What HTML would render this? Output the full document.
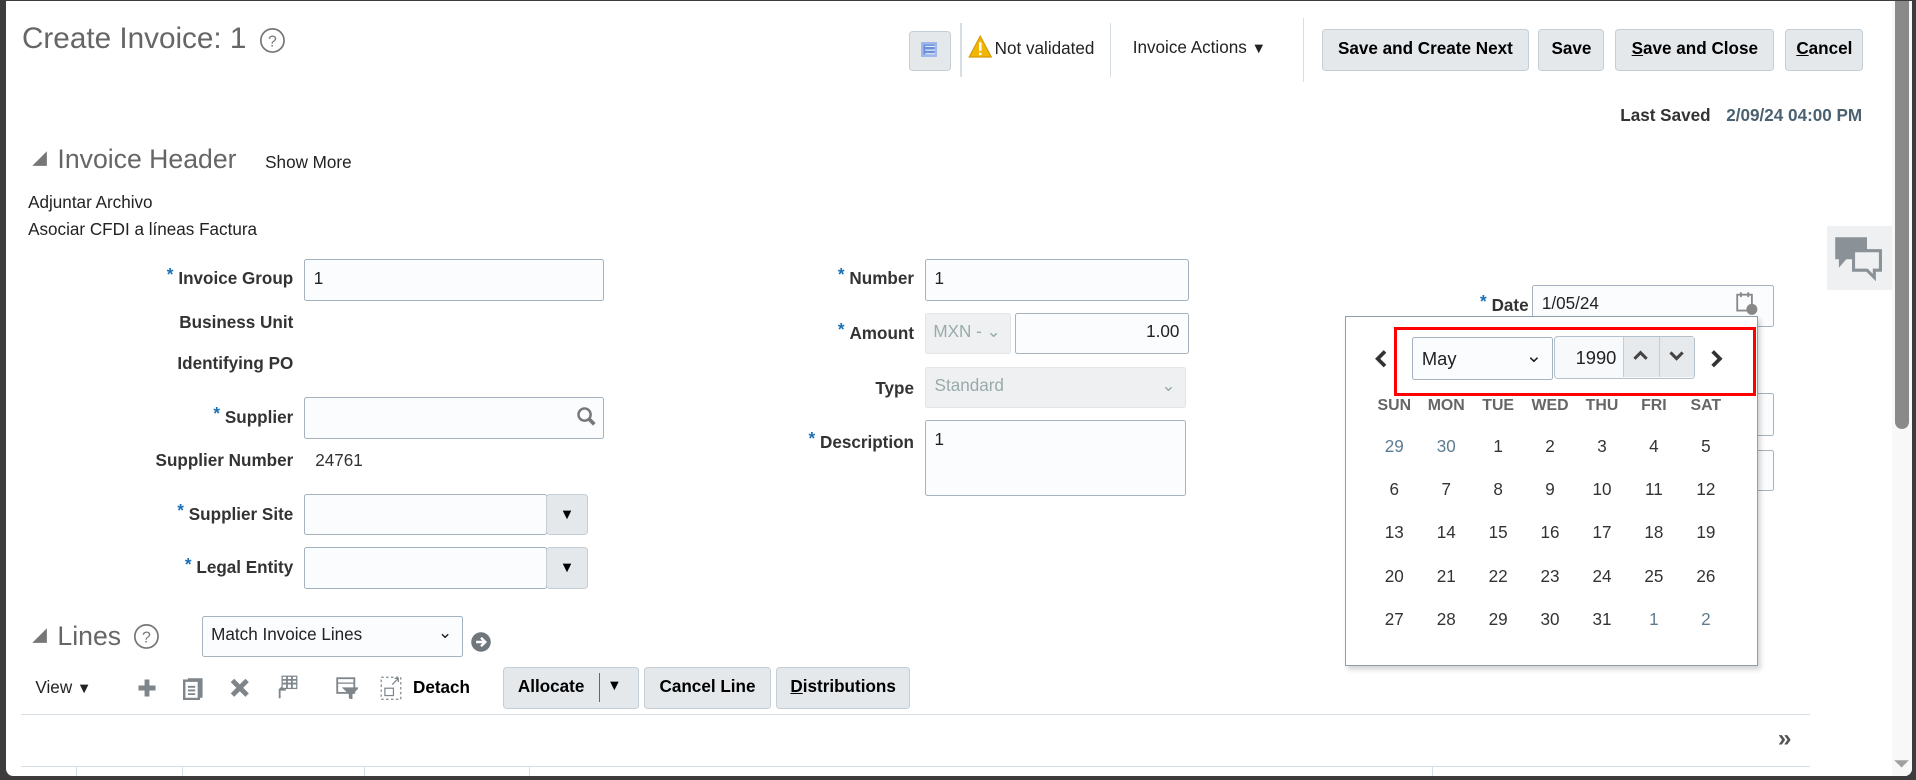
<!DOCTYPE html>
<html><head><meta charset="utf-8">
<style>
html,body{margin:0;padding:0;background:#3a3a3a;overflow:hidden;width:1916px;height:780px}
#w{zoom:1.22194;position:relative;width:1568px;height:638px;background:#3c3c3c;font-family:"Liberation Sans",Arial,sans-serif;}
#p{position:absolute;left:5px;top:1px;width:1560px;height:634px;background:#fff;border-radius:0 0 6px 6px;overflow:hidden}
.a{position:absolute;white-space:nowrap}
.lbl{position:absolute;font-size:14px;font-weight:bold;color:#333;text-align:right;white-space:nowrap}
.st{color:#1a6fb5;font-weight:bold;margin-right:4px;position:relative;top:-3px}
.inp{position:absolute;border:1px solid #a5b3c0;border-radius:2px;background:#fbfcfd;box-sizing:border-box;font-size:14px;color:#222;padding:7px 7px;white-space:nowrap;overflow:hidden}
.dis{background:#eef0f1;border-color:#e3e6e8;color:#9aa}
.btn{position:absolute;box-sizing:border-box;border:1px solid #c4ced7;border-radius:3px;background:#e4e8eb;font-size:14px;font-weight:bold;color:#000;text-align:center;line-height:31px}
.sep{position:absolute;width:1px;background:#d6dde3}
.cal td{width:42.5px;height:35.5px;text-align:center;font-size:14px;color:#333;padding:0}
.cal th{height:23px;font-size:13px;color:#666;font-weight:bold;text-align:center;padding:0;vertical-align:top}
.o{color:#5d7b91!important}
</style></head><body><div id="w"><div id="p">
<div class="a" style="left:13px;top:17px;font-size:24.3px;color:#666">Create Invoice: 1</div>
<svg class="a" style="left:207px;top:21px" width="22" height="22"><circle cx="11" cy="11" r="9.5" fill="none" stroke="#777" stroke-width="1.4"/><text x="11" y="16" font-size="13" text-anchor="middle" fill="#777" font-family="Liberation Sans">?</text></svg>

<div class="btn" style="left:739px;top:24px;width:34px;height:33px"></div>
<div class="a" style="left:749px;top:33px;width:13px;height:13px;background:#6d8fd8;border-radius:1px;box-shadow:inset 0 0 0 2px #9fb8ea"></div>
<svg class="a" style="left:751px;top:35px" width="10" height="10"><path d="M1 2h8M1 5h8M1 8h8" stroke="#dfe8fa" stroke-width="1"/></svg>
<div class="sep" style="left:781px;top:18px;height:44px"></div>
<svg class="a" style="left:787px;top:28px" width="20" height="19"><path d="M10 1 L19 18 L1 18Z" fill="#f2b705" stroke="#d49a00"/><rect x="9" y="6" width="2" height="7" fill="#fff"/><rect x="9" y="14.5" width="2" height="2" fill="#fff"/></svg>
<div class="a" style="left:809px;top:31px;font-size:14px;color:#222">Not validated</div>
<div class="sep" style="left:903px;top:18px;height:44px"></div>
<div class="a" style="left:922px;top:30px;font-size:14px;color:#222">Invoice Actions <span style="font-size:12px">▼</span></div>
<div class="sep" style="left:1061px;top:14px;height:52px"></div>
<div class="btn" style="left:1077px;top:23px;width:169px;height:34px">Save and Create Next</div>
<div class="btn" style="left:1254px;top:23px;width:54px;height:34px">Save</div>
<div class="btn" style="left:1317px;top:23px;width:130px;height:34px"><u>S</u>ave and Close</div>
<div class="btn" style="left:1456px;top:23px;width:64px;height:34px"><u>C</u>ancel</div>

<div class="a" style="left:1321px;top:86px;font-size:14px;font-weight:bold;color:#333">Last Saved <span style="color:#4b6171;margin-left:9px">2/09/24 04:00 PM</span></div>

<svg class="a" style="left:20px;top:122px" width="14" height="14"><path d="M13 1 L13 13 L1 13Z" fill="#777"/></svg>
<div class="a" style="left:42px;top:117px;font-size:21.8px;color:#666">Invoice Header</div>
<div class="a" style="left:212px;top:124px;font-size:14px;color:#222">Show More</div>
<div class="a" style="left:18px;top:157px;font-size:14px;color:#222">Adjuntar Archivo</div>
<div class="a" style="left:18px;top:179px;font-size:14px;color:#222">Asociar CFDI a líneas Factura</div>

<div class="lbl" style="right:1325px;top:219px"><span class="st">*</span>Invoice Group</div>
<div class="inp" style="left:244px;top:211px;width:245px;height:34px">1</div>
<div class="lbl" style="right:1325px;top:255px">Business Unit</div>
<div class="lbl" style="right:1325px;top:289px">Identifying PO</div>
<div class="lbl" style="right:1325px;top:333px"><span class="st">*</span>Supplier</div>
<div class="inp" style="left:244px;top:324px;width:245px;height:34px"></div>
<svg class="a" style="left:466px;top:331px" width="18" height="18"><circle cx="7" cy="7" r="5" fill="none" stroke="#777" stroke-width="2"/><path d="M10.5 10.5 L15 15" stroke="#777" stroke-width="3"/></svg>
<div class="lbl" style="right:1325px;top:368px">Supplier Number</div>
<div class="a" style="left:253px;top:368px;font-size:14px;color:#333">24761</div>
<div class="lbl" style="right:1325px;top:412px"><span class="st">*</span>Supplier Site</div>
<div class="inp" style="left:244px;top:403px;width:199px;height:34px"></div>
<div class="btn" style="left:442px;top:403px;width:34px;height:34px;font-size:12px;line-height:33px">▼</div>
<div class="lbl" style="right:1325px;top:456px"><span class="st">*</span>Legal Entity</div>
<div class="inp" style="left:244px;top:447px;width:199px;height:34px"></div>
<div class="btn" style="left:442px;top:447px;width:34px;height:34px;font-size:12px;line-height:33px">▼</div>

<div class="lbl" style="right:817px;top:219px"><span class="st">*</span>Number</div>
<div class="inp" style="left:752px;top:211px;width:216px;height:34px">1</div>
<div class="lbl" style="right:817px;top:264px"><span class="st">*</span>Amount</div>
<div class="inp dis" style="left:752px;top:255px;width:70px;height:34px;padding-left:6px">MXN - ⌄</div>
<div class="inp" style="left:826px;top:255px;width:142px;height:34px;text-align:right">1.00</div>
<div class="lbl" style="right:817px;top:309px">Type</div>
<div class="inp dis" style="left:752px;top:299px;width:214px;height:34px">Standard<span style="position:absolute;right:8px">⌄</span></div>
<div class="lbl" style="right:817px;top:353px"><span class="st">*</span>Description</div>
<div class="inp" style="left:752px;top:343px;width:214px;height:62px">1</div>

<div class="lbl" style="right:314px;top:241px"><span class="st">*</span>Date</div>
<div class="inp" style="left:1249px;top:232px;width:198px;height:35px">1/05/24</div>
<svg class="a" style="left:1416px;top:237px" width="18" height="20"><rect x="1" y="3" width="12" height="13" fill="none" stroke="#888" stroke-width="1.5"/><path d="M4 1v4M10 1v4" stroke="#888" stroke-width="1.5"/><circle cx="13" cy="15" r="4.5" fill="#888"/></svg>
<div class="inp" style="left:1400px;top:321px;width:47px;height:35px"></div>
<div class="inp" style="left:1400px;top:367px;width:47px;height:34px"></div>

<div class="a" style="left:1490px;top:184px;width:53px;height:52px;background:#eef0f1"></div>
<svg class="a" style="left:1496px;top:192px" width="42" height="38"><path d="M1 1h26v18h-17l-6 7v-7h-3z" fill="#8a9197"/><path d="M16 12h22v16h-5v6l-6-6h-11z" fill="#eef0f1" stroke="#8a9197" stroke-width="2.5"/></svg>

<div class="a" style="left:1096px;top:258px;width:338px;height:286px;background:#fff;border:1px solid #8d9ea9;box-sizing:border-box;box-shadow:2px 3px 4px rgba(0,0,0,.18)">
 <div class="a" style="left:39px;top:8px;width:296px;height:56px;border:3px solid #f00;box-sizing:border-box"></div>
 <svg class="a" style="left:23px;top:26px" width="12" height="16"><path d="M9 2 L3 8 L9 14" fill="none" stroke="#333" stroke-width="3"/></svg>
 <div class="inp" style="left:54px;top:16px;width:115px;height:35px;font-size:15px;padding-top:8px">May<span style="position:absolute;right:8px;top:5px;font-size:16px">⌄</span></div>
 <div class="a" style="left:170px;top:15px;width:115px;height:35px;border:1px solid #b4c0ca;border-radius:3px;box-sizing:border-box;background:#f8f9fa"></div>
 <div class="a" style="left:181px;top:24px;font-size:15px;color:#222;width:40px;text-align:right">1990</div>
 <div class="a" style="left:226px;top:16px;width:30px;height:33px;background:#e6eaec;border-left:1px solid #c4ced7"></div>
 <div class="a" style="left:256px;top:16px;width:28px;height:33px;background:#e6eaec;border-left:1px solid #c4ced7"></div>
 <svg class="a" style="left:234px;top:26px" width="14" height="10"><path d="M2 8 L7 3 L12 8" fill="none" stroke="#444" stroke-width="2.5"/></svg>
 <svg class="a" style="left:263px;top:27px" width="14" height="10"><path d="M2 2 L7 7 L12 2" fill="none" stroke="#444" stroke-width="2.5"/></svg>
 <svg class="a" style="left:297px;top:26px" width="12" height="16"><path d="M3 2 L9 8 L3 14" fill="none" stroke="#333" stroke-width="3"/></svg>
 <table class="cal a" style="left:18px;top:65px;border-collapse:collapse">
 <tr><th>SUN</th><th>MON</th><th>TUE</th><th>WED</th><th>THU</th><th>FRI</th><th>SAT</th></tr>
 <tr><td class="o">29</td><td class="o">30</td><td>1</td><td>2</td><td>3</td><td>4</td><td>5</td></tr>
 <tr><td>6</td><td>7</td><td>8</td><td>9</td><td>10</td><td>11</td><td>12</td></tr>
 <tr><td>13</td><td>14</td><td>15</td><td>16</td><td>17</td><td>18</td><td>19</td></tr>
 <tr><td>20</td><td>21</td><td>22</td><td>23</td><td>24</td><td>25</td><td>26</td></tr>
 <tr><td>27</td><td>28</td><td>29</td><td>30</td><td>31</td><td class="o">1</td><td class="o">2</td></tr>
 </table>
</div>

<svg class="a" style="left:20px;top:512px" width="14" height="14"><path d="M13 1 L13 13 L1 13Z" fill="#777"/></svg>
<div class="a" style="left:42px;top:507px;font-size:21.8px;color:#666">Lines</div>
<svg class="a" style="left:104px;top:509px" width="22" height="22"><circle cx="11" cy="11" r="9.5" fill="none" stroke="#777" stroke-width="1.4"/><text x="11" y="16" font-size="13" text-anchor="middle" fill="#777" font-family="Liberation Sans">?</text></svg>
<div class="inp" style="left:160px;top:503px;width:214px;height:34px">Match Invoice Lines<span style="position:absolute;right:8px;top:5px">⌄</span></div>
<svg class="a" style="left:380px;top:515px" width="18" height="18"><circle cx="9" cy="9" r="8" fill="#6f777d"/><path d="M5 9h7M9 5.5l3.5 3.5-3.5 3.5" fill="none" stroke="#fff" stroke-width="2"/></svg>

<div class="a" style="left:24px;top:554px;font-size:14px;color:#222">View <span style="font-size:12px">▼</span></div>
<svg class="a" style="left:106px;top:553px" width="18" height="18"><path d="M9 2v14M2 9h14" stroke="#7e868c" stroke-width="4"/></svg>
<svg class="a" style="left:145px;top:553px" width="18" height="19"><rect x="4" y="1" width="12" height="16" fill="#7e868c"/><rect x="1" y="3" width="12" height="15" fill="#fff" stroke="#7e868c" stroke-width="2"/><path d="M4 8h6M4 11h6M4 14h6" stroke="#7e868c" stroke-width="1.5"/></svg>
<svg class="a" style="left:183px;top:554px" width="16" height="16"><path d="M2 2L14 14M14 2L2 14" stroke="#7e868c" stroke-width="4"/></svg>
<svg class="a" style="left:221px;top:551px" width="18" height="20"><rect x="5" y="1" width="12" height="10" fill="none" stroke="#7e868c"/><path d="M5 4h12M5 7h12M9 1v10M13 1v10M3 19v-7h5M5 10l-2 2" fill="none" stroke="#7e868c" stroke-width="1.5"/></svg>
<svg class="a" style="left:270px;top:553px" width="18" height="18"><rect x="1" y="1" width="14" height="12" fill="none" stroke="#7e868c" stroke-width="1.5"/><path d="M1 5h14M6 9h12l-5 5v4l-2-1v-3z" fill="#7e868c" stroke="#7e868c"/></svg>
<svg class="a" style="left:306px;top:552px" width="18" height="20"><rect x="1" y="1" width="16" height="18" fill="none" stroke="#7e868c" stroke-dasharray="2 2"/><rect x="4" y="10" width="7" height="6" fill="none" stroke="#7e868c"/><path d="M10 7l5-5M12 2h3v3" stroke="#7e868c" fill="none"/></svg>
<div class="a" style="left:333px;top:554px;font-size:14px;font-weight:bold;color:#000">Detach</div>
<div class="btn" style="left:407px;top:545px;width:111px;height:34px;text-align:left;padding-left:11px">Allocate<span style="position:absolute;left:77px;top:4px;width:1px;height:24px;background:#666"></span><span style="position:absolute;left:84px;font-size:12px">▼</span></div>
<div class="btn" style="left:522px;top:545px;width:104px;height:34px">Cancel Line</div>
<div class="btn" style="left:630px;top:545px;width:110px;height:34px"><u>D</u>istributions</div>

<div class="a" style="left:12px;top:583px;width:1464px;height:1px;background:#d6dfe6"></div>
<div class="a" style="left:1450px;top:592px;font-size:20px;color:#555;font-weight:bold">»</div>
<div class="a" style="left:12px;top:626px;width:1464px;height:1px;background:#d6dfe6"></div>
<div class="a" style="left:57px;top:626px;width:1px;height:10px;background:#d6dfe6"></div>
<div class="a" style="left:144px;top:626px;width:1px;height:10px;background:#d6dfe6"></div>
<div class="a" style="left:293px;top:626px;width:1px;height:10px;background:#d6dfe6"></div>
<div class="a" style="left:428px;top:626px;width:1px;height:10px;background:#d6dfe6"></div>
<div class="a" style="left:1167px;top:626px;width:1px;height:10px;background:#d6dfe6"></div>

<div class="a" style="left:1543px;top:0;width:17px;height:634px;background:#f8f8f8"></div>
<div class="a" style="left:1546px;top:0;width:11px;height:350px;background:#8a8a8a;border-radius:0 0 6px 6px"></div>
<svg class="a" style="left:1544px;top:620px" width="14" height="8"><path d="M1 1h12l-6 6z" fill="#a0a0a0"/></svg>
</div></div></body></html>
